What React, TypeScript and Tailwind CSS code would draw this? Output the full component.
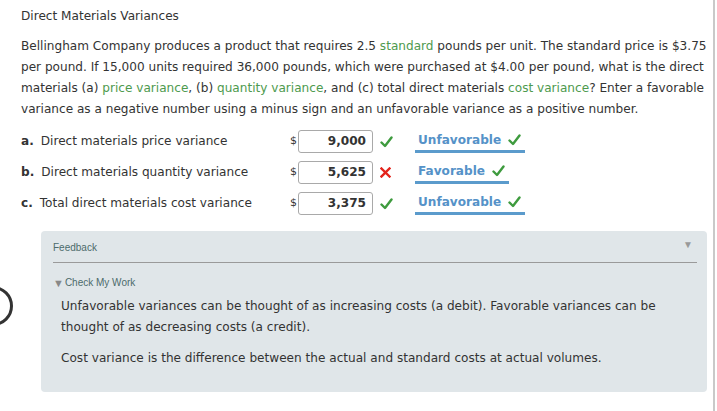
import React from 'react';

const Check = () => (
  <svg width="13" height="12" viewBox="0 0 13 12" className="inline-block">
    <path d="M1.5 6.5 L5 10 L11.5 1.5" fill="none" stroke="#3e9b3e" strokeWidth="2.4" strokeLinecap="round" strokeLinejoin="round" />
  </svg>
);

const Cross = () => (
  <svg width="11" height="11" viewBox="0 0 11 11" className="inline-block">
    <path d="M1.5 1.5 L9.5 9.5 M9.5 1.5 L1.5 9.5" fill="none" stroke="#e3231b" strokeWidth="2.4" strokeLinecap="square" />
  </svg>
);

interface RowProps {
  letter: string;
  label: string;
  value: string;
  correct: boolean;
  choice: string;
  choiceWidth: string;
}

const Row: React.FC<RowProps> = ({ letter, label, value, correct, choice, choiceWidth }) => (
  <div className="flex items-center h-[31px]">
    <div className="w-[269px] shrink-0 whitespace-nowrap">
      <span className="font-bold mr-[7px]">{letter}</span>{label}
    </div>
    <span className="w-[8px] text-[11px]">$</span>
    <div className="w-[75px] h-[23px] border border-[#a9a9a9] rounded-[3px] flex items-center justify-end pr-[6px] font-bold bg-white">
      {value}
    </div>
    <div className="w-[42px] pl-[7px] flex items-center">
      {correct ? <Check /> : <Cross />}
    </div>
    <div className={`${choiceWidth} h-[23px] border-b-[3px] border-[#5b9bcc] flex items-center pl-[3px] gap-[7px] font-bold text-[#5592c8]`}>
      {choice} <Check />
    </div>
  </div>
);

const App: React.FC = () => {
  return (
    <div className="relative w-[717px] h-[411px] bg-white overflow-hidden text-[12.1px] text-[#333] font-['Verdana','DejaVu_Sans',sans-serif]">
      <div className="w-[715px] h-full border-r-2 border-[#c9c9c9] pl-[21px] pt-[6px]">
        {/* Title */}
        <div className="leading-[20px]">Direct Materials Variances</div>

        {/* Problem text */}
        <p className="mt-[10px] leading-[21px] whitespace-nowrap">
          Bellingham Company produces a product that requires 2.5 <span className="text-[#4e9a4e]">standard</span> pounds per unit. The standard price is $3.75
          <br />
          per pound. If 15,000 units required 36,000 pounds, which were purchased at $4.00 per pound, what is the direct
          <br />
          materials (a) <span className="text-[#4e9a4e]">price variance</span>, (b) <span className="text-[#4e9a4e]">quantity variance</span>, and (c) total direct materials <span className="text-[#4e9a4e]">cost variance</span>? Enter a favorable
          <br />
          variance as a negative number using a minus sign and an unfavorable variance as a positive number.
        </p>

        {/* Answers */}
        <div className="mt-[6px]">
          <Row letter="a." label="Direct materials price variance" value="9,000" correct choice="Unfavorable" choiceWidth="w-[110px]" />
          <Row letter="b." label="Direct materials quantity variance" value="5,625" correct={false} choice="Favorable" choiceWidth="w-[94px]" />
          <Row letter="c." label="Total direct materials cost variance" value="3,375" correct choice="Unfavorable" choiceWidth="w-[110px]" />
        </div>

        {/* Feedback panel */}
        <div className="mt-[12px] ml-[20px] w-[666px] h-[161px] bg-[#e0e6e9] rounded-[4px] pl-[12px] pr-[10px]">
          <div className="flex items-center justify-between h-[31px] pt-[2px] font-['Liberation_Sans',Arial,sans-serif] text-[10px] text-[#4d6b6b]">
            <span>Feedback</span>
            <span className="text-[#999] text-[10px] pr-[4px] -mt-[6px]">▼</span>
          </div>
          <div className="border-t border-[#9a9a9a]" />
          <div className="mt-[13px] flex items-center gap-[1px] font-['Liberation_Sans',Arial,sans-serif] text-[10px] text-[#4d6b6b] leading-[14px]">
            <span className="text-[#888] text-[11px]">▼</span>
            <span>Check My Work</span>
          </div>
          <div className="pl-[8px] mt-[6px] leading-[21px] whitespace-nowrap">
            <p>
              Unfavorable variances can be thought of as increasing costs (a debit). Favorable variances can be
              <br />
              thought of as decreasing costs (a credit).
            </p>
            <p className="mt-[10px]">Cost variance is the difference between the actual and standard costs at actual volumes.</p>
          </div>
        </div>
      </div>

      {/* partially visible circle on the left edge */}
      <div className="absolute left-[-27px] top-[286px] w-[40px] h-[40px] rounded-full border-[3px] border-[#333]" />
    </div>
  );
};

export default App;
